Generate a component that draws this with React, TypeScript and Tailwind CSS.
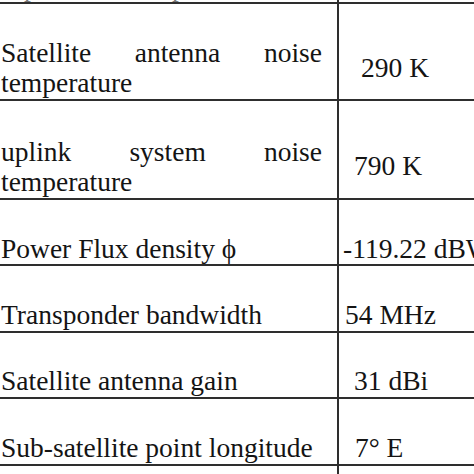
import React from 'react'

interface Row {
  label: string
  value: string
  h: string
  justify?: boolean
  lpb: string
  rpb: string
  rpl: string
}

const rows: Row[] = [
  { label: 'Satellite antenna noise temperature', value: '290 K', h: 'h-[97px]', justify: true, lpb: 'pb-[1px]', rpb: 'pb-[16px]', rpl: 'pl-[22px]' },
  { label: 'uplink system noise temperature', value: '790 K', h: 'h-[99px]', justify: true, lpb: 'pb-[1px]', rpb: 'pb-[17px]', rpl: 'pl-[15px]' },
  { label: 'Power Flux density \u03D5', value: '-119.22 dBW/m\u00B2', h: 'h-[66px]', lpb: 'pb-0', rpb: 'pb-0', rpl: 'pl-[4px]' },
  { label: 'Transponder bandwidth', value: '54 MHz', h: 'h-[67px]', lpb: 'pb-[1px]', rpb: 'pb-[1px]', rpl: 'pl-[6px]' },
  { label: 'Satellite antenna gain', value: '31 dBi', h: 'h-[66px]', lpb: 'pb-[1px]', rpb: 'pb-[1px]', rpl: 'pl-[15px]' },
  { label: 'Sub-satellite point longitude', value: '7\u00B0 E', h: 'h-[67px]', lpb: 'pb-[1px]', rpb: 'pb-[1px]', rpl: 'pl-[16px]' },
]

export default function App() {
  return (
    <div className="w-[474px] h-[474px] overflow-hidden bg-white text-[#141414] font-['Liberation_Serif','Times_New_Roman',serif] text-[27.5px] leading-[30px]">
      {/* cut-off previous row */}
      <div className="flex h-[2px]">
        <div className="w-[339px] shrink-0 overflow-hidden border-r-2 border-[#2e2e2e]">
          <div className="-mt-[28px] flex gap-[93px] pl-[1px] text-[#777]">
            <span>Input</span>
            <span>Uplink</span>
          </div>
        </div>
        <div className="flex-1" />
      </div>

      <div className="border-t-2 border-[#2e2e2e]">
        {rows.map(r => (
          <div key={r.label} className={`flex border-b-2 border-[#2e2e2e] ${r.h}`}>
            <div className={`w-[339px] shrink-0 border-r-2 border-[#2e2e2e] flex items-end pl-[1px] pr-[15px] ${r.lpb}`}>
              <p className={r.justify ? 'w-full text-justify' : 'whitespace-nowrap'}>{r.label}</p>
            </div>
            <div className={`flex-1 min-w-0 overflow-hidden flex items-end whitespace-nowrap ${r.rpl} ${r.rpb}`}>
              {r.value}
            </div>
          </div>
        ))}
      </div>

      <div className="flex h-[20px]">
        <div className="w-[339px] shrink-0 border-r-2 border-[#2e2e2e]" />
        <div className="flex-1" />
      </div>
    </div>
  )
}
